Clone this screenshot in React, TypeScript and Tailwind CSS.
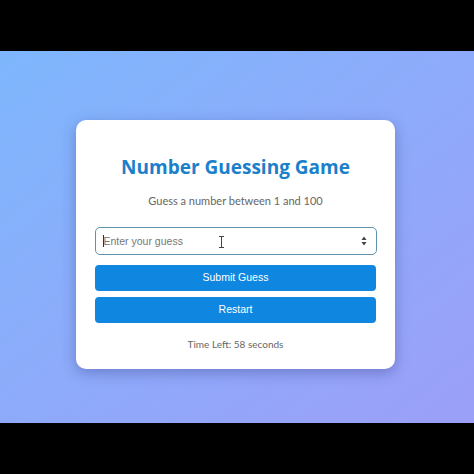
import React, { useState } from 'react';

export default function App() {
  const [guess, setGuess] = useState('');

  return (
    <div className="w-[474px] h-[474px] bg-black flex flex-col">
      <div className="h-[51px]" />
      <div className="h-[372px] bg-gradient-to-br from-[#7db6fc] to-[#9b9ff8] flex items-start justify-center pt-[69px] pr-[3px]">
        {/* Card */}
        <div className="w-[319px] bg-white rounded-[10px] shadow-[0_4px_14px_rgba(40,50,120,0.35)] px-[19px] pt-[32px] pb-[18px] flex flex-col items-center">
          <h1 className="text-[19px] font-bold text-[#1b80cb] leading-[30px] font-['Open_Sans',sans-serif]">
            Number Guessing Game
          </h1>
          <p className="mt-[11px] text-[11px] text-[#666] leading-[16px] font-['Lato',sans-serif]">
            Guess a number between 1 and 100
          </p>
          <div className="relative mt-[18px] w-[282px]">
            <input
              type="number"
              value={guess}
              onChange={(e) => setGuess(e.target.value)}
              placeholder="Enter your guess"
              className="w-full h-[28px] border-[1.5px] border-[#5d93ac] rounded-[5px] pl-[8px] pr-[24px] text-[10.5px] text-[#333] placeholder:text-[#777] font-['Liberation_Sans',sans-serif] outline-none [appearance:textfield] [&::-webkit-inner-spin-button]:appearance-none"
            />
            {/* caret */}
            <span className="absolute left-[8px] top-[8px] w-px h-[12px] bg-[#333]" />
            {/* spinner */}
            <svg className="absolute right-[10px] top-[9px]" width="6" height="10" viewBox="0 0 6 10">
              <path d="M3 0.5 L5.5 4 L0.5 4 Z" fill="#444" />
              <path d="M3 9.5 L5.5 6 L0.5 6 Z" fill="#444" />
            </svg>
            {/* mouse I-beam */}
            <svg className="absolute left-[123px] top-[9px]" width="7" height="12" viewBox="0 0 7 12">
              <path d="M1 0.5 H6 M3.5 0.5 V11.5 M1 11.5 H6" stroke="#444" strokeWidth="1" fill="none" />
            </svg>
          </div>
          <button className="mt-[10px] w-[281px] h-[26px] bg-[#0f87e1] text-white rounded-[4px] text-[10.5px] font-['Liberation_Sans',sans-serif]">
            Submit Guess
          </button>
          <button className="mt-[6px] w-[281px] h-[26px] bg-[#0f87e1] text-white rounded-[4px] text-[10.5px] font-['Liberation_Sans',sans-serif]">
            Restart
          </button>
          <p className="mt-[14px] text-[10px] text-[#666] leading-[14px] font-['Lato',sans-serif]">
            Time Left: 58 seconds
          </p>
        </div>
      </div>
      <div className="flex-1" />
    </div>
  );
}
